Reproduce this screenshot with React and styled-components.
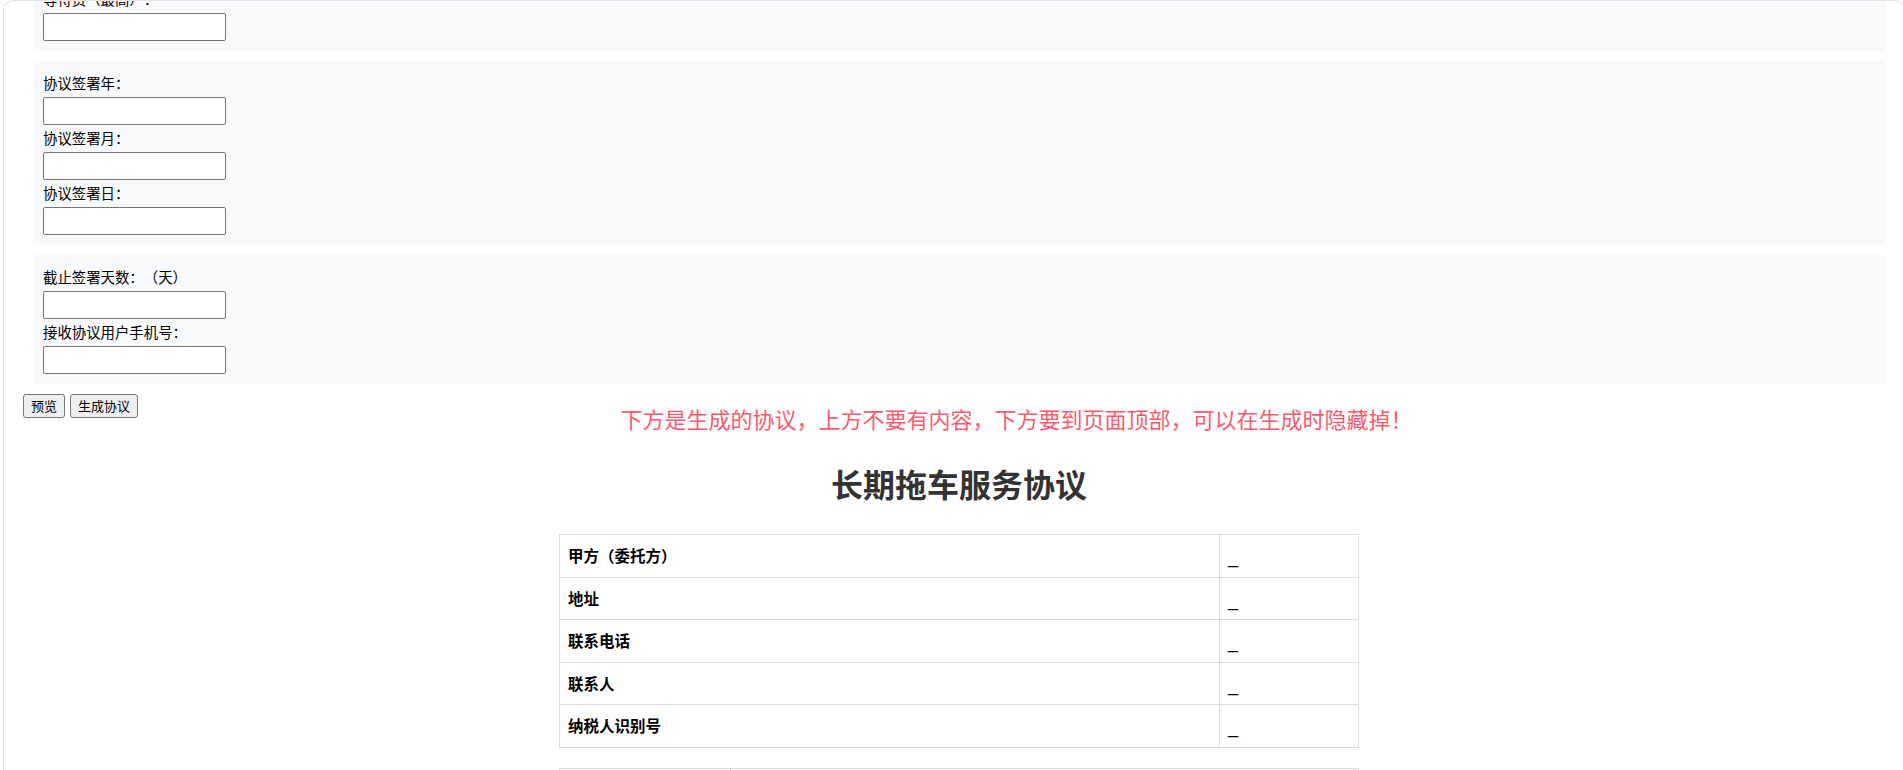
import React, { useLayoutEffect, useRef } from "react";
import styled, { createGlobalStyle } from "styled-components";

const GlobalStyle = createGlobalStyle`
  html, body {
    margin: 0;
    padding: 0;
    overflow: hidden;
    background: #fff;
  }
  body {
    font-family: "Noto Sans CJK SC", "Noto Sans", sans-serif;
    color: #000;
    text-spacing-trim: space-all;
  }
`;

const Frame = styled.div`
  box-sizing: border-box;
  margin-left: 3px;
  width: 1902px;
  height: 770px;
  border: 1px solid #e3e5e8;
  border-bottom: none;
  border-radius: 10px 10px 0 0;
  padding: 10px 9px 0 19px;
  overflow: hidden;
`;

const Panel = styled.section`
  background: #f8f9fa;
  margin: 0 10px 10px;
  padding: 9px 10px 10px;
`;

const Label = styled.label`
  display: block;
  font-size: 14.4px;
  line-height: 21px;
  margin: 2px 0 4px;
`;

const Input = styled.input`
  display: block;
  box-sizing: border-box;
  width: 183px;
  height: 28px;
  margin: 0;
  padding: 1px 4px;
  border: 1px solid #767676;
  border-radius: 2px;
  background: #fff;
  font: inherit;
  font-size: 14px;
`;

const ActionRow = styled.div`
  display: flex;
  align-items: flex-start;
`;

const Buttons = styled.div`
  display: flex;
  gap: 5px;
`;

const Button = styled.button`
  box-sizing: border-box;
  height: 24px;
  padding: 0 7px;
  font-family: inherit;
  font-size: 13px;
  line-height: 22px;
  color: #000;
  background: #efefef;
  border: 1px solid #767676;
  border-radius: 3px;
`;

const Notice = styled.p`
  flex: 1;
  margin: 9px 0 0;
  text-align: center;
  font-size: 22px;
  line-height: 31px;
  color: #ff5a6b;
`;

const Title = styled.h1`
  margin: 26px 0 28px;
  text-align: center;
  font-size: 32px;
  line-height: 46px;
  font-weight: 700;
  color: #333;
`;

const Table = styled.table`
  width: 800px;
  margin: 0 auto 20px;
  border-collapse: collapse;
`;

const Cell = styled.td`
  border: 1px solid #ddd;
  padding: ${(p) => (p.$value ? "10px 8px 8px" : "10px 8px")};
  font-size: ${(p) => (p.$value ? "14px" : "15.5px")};
  line-height: 21.6px;
  font-weight: ${(p) => (p.$value ? 400 : 700)};
  vertical-align: ${(p) => (p.$value ? "bottom" : "middle")};
  width: ${(p) => p.$w || "auto"};
`;

const Blank = styled.span`
  font-family: "Liberation Sans", Arial, sans-serif;
  font-size: 18px;
  line-height: 1;
`;

const panels = [
  ["拖车起步价：", "超出公里单价：", "等待费（最高）："],
  ["协议签署年：", "协议签署月：", "协议签署日："],
  ["截止签署天数：（天）", "接收协议用户手机号："],
];

const partyA = ["甲方（委托方）", "地址", "联系电话", "联系人", "纳税人识别号"];
const partyB = ["乙方（受托方）", "地址", "联系电话", "联系人", "纳税人识别号"];

const PartyTable = ({ rows, labelWidth }) => (
  <Table>
    <tbody>
      {rows.map((r) => (
        <tr key={r}>
          <Cell $w={labelWidth}>{r}</Cell>
          <Cell $value>
            <Blank>_</Blank>
          </Cell>
        </tr>
      ))}
    </tbody>
  </Table>
);

export default function App() {
  const frameRef = useRef(null);

  // the page is shown scrolled down inside its frame
  useLayoutEffect(() => {
    if (frameRef.current) frameRef.current.scrollTop = 144;
  }, []);

  return (
    <>
      <GlobalStyle />
      <Frame ref={frameRef}>
        {panels.map((fields, i) => (
          <Panel key={i}>
            {fields.map((f) => (
              <React.Fragment key={f}>
                <Label>{f}</Label>
                <Input type="text" />
              </React.Fragment>
            ))}
          </Panel>
        ))}
        <ActionRow>
          <Buttons>
            <Button>预览</Button>
            <Button>生成协议</Button>
          </Buttons>
          <Notice>下方是生成的协议，上方不要有内容，下方要到页面顶部，可以在生成时隐藏掉！</Notice>
        </ActionRow>
        <Title>长期拖车服务协议</Title>
        <PartyTable rows={partyA} labelWidth="82.6%" />
        <PartyTable rows={partyB} labelWidth="21.4%" />
      </Frame>
    </>
  );
}
